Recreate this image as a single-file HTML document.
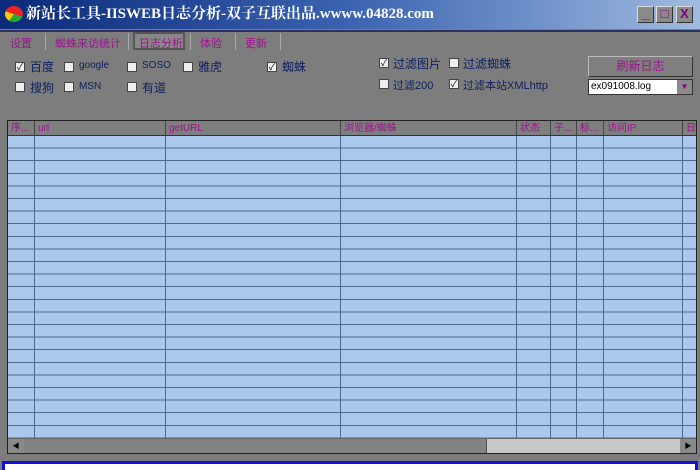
<!DOCTYPE html><html><head><meta charset="utf-8"><style>
*{margin:0;padding:0;box-sizing:border-box}
body{width:700px;height:470px;background:#7d7d7d;position:relative;overflow:hidden;font-family:"Liberation Sans","Noto Sans CJK SC",sans-serif;font-size:11px}
.a{position:absolute}
.title{left:0;top:0;width:700px;height:29px;background:linear-gradient(90deg,#0a2a7a,#3b63b0 50%,#9fbbe0);color:#fff;font-family:"Liberation Serif","Noto Serif CJK SC",serif;font-size:15px;font-weight:bold;line-height:29px;padding-left:26px}
.btn{width:17px;height:17px;top:6px;background:#8a8a8a;border:1px solid;border-color:#ddd #333 #333 #ddd;color:#800080;font-size:13px;text-align:center;line-height:14px;font-weight:bold}
.tab{top:35px;color:#a01090;font-size:11px}
.cb{width:10px;height:10px;background:#eee;border:1px solid #444;font-size:9px;line-height:8px;text-align:center;color:#000}
.lb{color:#102060;font-size:12px}
.tbl{left:7px;top:120px;width:690px;height:334px;border:1px solid #222;background:#a9c8ec;overflow:hidden}
.hdr{position:absolute;left:0;top:0;height:15px;width:100%;background:#7f7f7f;border-bottom:1px solid #333}
.hc{position:absolute;top:0;height:15px;border-right:1px solid #444;color:#a01090;font-size:10px;line-height:15px;padding-left:3px;white-space:nowrap;overflow:hidden}
</style></head><body>
<div class="a title">新站长工具-IISWEB日志分析-双子互联出品.wwww.04828.com</div>
<div class="a" style="left:5px;top:6px;width:18px;height:16px;border-radius:50%;background:conic-gradient(#e22 0 30%,#2a3 0 60%,#fc0 0 80%,#e22 0)"></div>
<div class="a btn" style="left:637px">_</div><div class="a btn" style="left:656px">□</div><div class="a btn" style="left:676px">X</div>
<div class="a" style="left:0;top:30px;width:700px;height:2px;background:#303060"></div>
<div class="a tab" style="left:10px">设置</div>
<div class="a tab" style="left:55px">蜘蛛来访统计</div>
<div class="a" style="left:133px;top:32px;width:52px;height:18px;border:2px solid #555;background:#888"></div>
<div class="a tab" style="left:139px">日志分析</div>
<div class="a tab" style="left:200px">体验</div>
<div class="a tab" style="left:245px">更新</div>
<div class="a" style="left:45px;top:33px;width:1px;height:17px;background:#aaa"></div>
<div class="a" style="left:128px;top:33px;width:1px;height:17px;background:#aaa"></div>
<div class="a" style="left:190px;top:33px;width:1px;height:17px;background:#aaa"></div>
<div class="a" style="left:235px;top:33px;width:1px;height:17px;background:#aaa"></div>
<div class="a" style="left:280px;top:33px;width:1px;height:17px;background:#aaa"></div>
<div class="a cb" style="left:15px;top:62px">✓</div><div class="a lb" style="left:30px;top:58px">百度</div>
<div class="a cb" style="left:64px;top:62px"></div><div class="a lb" style="left:79px;top:60px;font-size:10px">google</div>
<div class="a cb" style="left:127px;top:62px"></div><div class="a lb" style="left:142px;top:60px;font-size:10px">SOSO</div>
<div class="a cb" style="left:183px;top:62px"></div><div class="a lb" style="left:198px;top:58px">雅虎</div>
<div class="a cb" style="left:267px;top:62px">✓</div><div class="a lb" style="left:282px;top:58px">蜘蛛</div>
<div class="a cb" style="left:15px;top:82px"></div><div class="a lb" style="left:30px;top:79px">搜狗</div>
<div class="a cb" style="left:64px;top:82px"></div><div class="a lb" style="left:79px;top:81px;font-size:10px">MSN</div>
<div class="a cb" style="left:127px;top:82px"></div><div class="a lb" style="left:142px;top:79px">有道</div>
<div class="a cb" style="left:379px;top:58px">✓</div><div class="a lb" style="left:393px;top:55px">过滤图片</div>
<div class="a cb" style="left:449px;top:58px"></div><div class="a lb" style="left:463px;top:55px">过滤蜘蛛</div>
<div class="a cb" style="left:379px;top:79px"></div><div class="a lb" style="left:393px;top:77px;font-size:11px">过滤200</div>
<div class="a cb" style="left:449px;top:79px">✓</div><div class="a lb" style="left:463px;top:77px;font-size:11px">过滤本站XMLhttp</div>
<div class="a" style="left:588px;top:56px;width:105px;height:21px;background:#7f7f7f;border:1px solid;border-color:#bbb #333 #333 #bbb;color:#a01090;font-size:12px;text-align:center;line-height:19px">刷新日志</div>
<div class="a" style="left:588px;top:79px;width:105px;height:16px;background:#fff;border:1px solid #333;font-size:10px;line-height:14px;padding-left:2px;color:#000">ex091008.log</div>
<div class="a" style="left:677px;top:80px;width:15px;height:14px;background:#8a8a8a;color:#800080;font-size:8px;text-align:center;line-height:14px">▼</div>
<div class="a tbl">
<div style="position:absolute;left:0;top:15px;width:100%;height:320px;background:repeating-linear-gradient(180deg,#a9c8ec 0 11.6px,#4a6a90 11.6px 12.6px)"></div>
<div style="position:absolute;top:15px;height:320px;left:26px;width:1px;background:#4a6a90"></div>
<div style="position:absolute;top:15px;height:320px;left:157px;width:1px;background:#4a6a90"></div>
<div style="position:absolute;top:15px;height:320px;left:332px;width:1px;background:#4a6a90"></div>
<div style="position:absolute;top:15px;height:320px;left:508px;width:1px;background:#4a6a90"></div>
<div style="position:absolute;top:15px;height:320px;left:542px;width:1px;background:#4a6a90"></div>
<div style="position:absolute;top:15px;height:320px;left:568px;width:1px;background:#4a6a90"></div>
<div style="position:absolute;top:15px;height:320px;left:595px;width:1px;background:#4a6a90"></div>
<div style="position:absolute;top:15px;height:320px;left:674px;width:1px;background:#4a6a90"></div>
<div class="hdr">
<div class="hc" style="left:0;width:27px">序...</div>
<div class="hc" style="left:27px;width:131px">url</div>
<div class="hc" style="left:158px;width:175px">getURL</div>
<div class="hc" style="left:333px;width:176px">浏览器/蜘蛛</div>
<div class="hc" style="left:509px;width:34px">状态</div>
<div class="hc" style="left:543px;width:26px">子...</div>
<div class="hc" style="left:569px;width:27px">标...</div>
<div class="hc" style="left:596px;width:79px">访问IP</div>
<div class="hc" style="left:675px;width:20px">日</div>
</div>
<div style="position:absolute;left:0;top:317px;width:100%;height:16px;background:#c8c8c8;border-top:1px solid #666"></div>
<div style="position:absolute;left:16px;top:318px;width:463px;height:15px;background:#838383;border-right:1px solid #555"></div>
<div style="position:absolute;left:0;top:318px;width:16px;height:15px;background:#8a8a8a;font-size:7px;line-height:15px;text-align:center;color:#000">◀</div>
<div style="position:absolute;left:672px;top:318px;width:16px;height:15px;background:#8a8a8a;font-size:7px;line-height:15px;text-align:center;color:#000">▶</div>
</div>
<div class="a" style="left:2px;top:461px;width:696px;height:9px;background:#1010e0;padding:3px 3px 0"><div style="background:#fff;height:6px"></div></div>
</body></html>
